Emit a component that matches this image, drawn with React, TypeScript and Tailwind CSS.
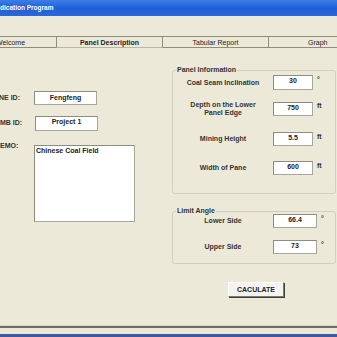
import React from "react";

const Field = ({ value, className = "" }: { value: string; className?: string }) => (
  <div
    className={`bg-white border border-[#a7a69a] border-t-[#8d8c80] border-l-[#8d8c80] text-center font-bold text-[7px] leading-[10px] text-[#222] ${className}`}
  >
    {value}
  </div>
);

const Row = ({
  label,
  value,
  unit,
  h = "h-[15px]",
  w = "w-[40px]",
}: {
  label: React.ReactNode;
  value: string;
  unit: string;
  h?: string;
  w?: string;
}) => (
  <div className="flex items-center">
    <div className="w-[100px] text-center font-bold text-[7px] leading-[8px] text-[#333]">
      {label}
    </div>
    <Field value={value} className={`${w} ${h}`} />
    <div className="ml-[4px] font-bold text-[7px] text-[#333] self-start">{unit}</div>
  </div>
);

export default function App() {
  return (
    <div
      className="w-[337px] h-[337px] overflow-hidden bg-[#ece9d8] flex flex-col text-[#222]"
      style={{ fontFamily: '"Liberation Sans", Arial, sans-serif' }}
    >
      {/* title bar */}
      <div className="h-[16px] bg-gradient-to-b from-[#3d7ee6] via-[#1f5fd6] to-[#2a66dc] flex items-center">
        <span className="text-white font-bold text-[6.5px] leading-none">dication Program</span>
      </div>

      {/* tabs */}
      <div className="mt-[20px] h-[12px] flex text-[7px] leading-none">
        <div className="w-[60px] border-y border-[#8e8d80] flex items-center -ml-[4px] pl-0 shrink-0">
          <span>Welcome</span>
        </div>
        <div className="w-[107px] border-y border-x border-[#8e8d80] border-b-[#b8b6a8] flex items-center justify-center font-bold shrink-0">
          Panel Description
        </div>
        <div className="w-[106px] border-y border-r border-[#8e8d80] flex items-center justify-center shrink-0">
          Tabular Report
        </div>
        <div className="w-[90px] border-y border-[#8e8d80] flex items-center pl-[39px] shrink-0">
          Graph
        </div>
      </div>

      {/* content */}
      <div className="flex flex-1">
        <div className="w-[172px] pt-[43px] flex flex-col text-[7px] font-bold text-[#333]">
          <div className="flex items-center h-[14px]">
            <span className="w-[35px] -ml-[1px]">NE ID:</span>
            <Field value="Fengfeng" className="w-[63px] h-[14px] pt-[1px]" />
          </div>
          <div className="flex items-center h-[15px] mt-[11px]">
            <span className="w-[35px]">MB ID:</span>
            <Field value="Project 1" className="w-[63px] h-[15px]" />
          </div>
          <div className="flex mt-[14px]">
            <span className="w-[34px] -mt-[4px]">EMO:</span>
            <div className="w-[101px] h-[77px] bg-white border border-[#a7a69a] border-t-[#8d8c80] border-l-[#8d8c80] px-[1px] text-[7px] font-bold leading-[10px] text-[#222]">
              Chinese Coal Field
            </div>
          </div>
        </div>

        <div className="flex flex-col w-[164px] pt-[18px]">
          <fieldset className="border border-[#d0cfc0] rounded-[3px] h-[128px] px-0 pb-0">
            <legend className="ml-[3px] px-[1px] font-bold text-[7px] leading-[8px] text-[#333]">
              Panel Information
            </legend>
            <div className="flex flex-col pt-[1px]">
              <Row label="Coal Seam Inclination" value="30" unit="°" />
              <div className="mt-[11px]">
                <Row
                  label={
                    <>
                      Depth on the Lower
                      <br />
                      Panel Edge
                    </>
                  }
                  value="750"
                  unit="ft"
                  h="h-[14px]"
                />
              </div>
              <div className="mt-[15px]">
                <Row label="Mining Height" value="5.5" unit="ft" h="h-[14px]" />
              </div>
              <div className="mt-[15px]">
                <Row label="Width of Pane" value="600" unit="ft" h="h-[14px]" />
              </div>
            </div>
          </fieldset>

          <fieldset className="mt-[13px] border border-[#d0cfc0] rounded-[3px] h-[57px] px-0 pb-0">
            <legend className="ml-[3px] px-[1px] font-bold text-[7px] leading-[8px] text-[#333]">
              Limit Angle
            </legend>
            <div className="flex flex-col -mt-[1px]">
              <Row label="Lower Side" value="66.4" unit="°" w="w-[44px]" h="h-[14px]" />
              <div className="mt-[12px]">
                <Row label="Upper Side" value="73" unit="°" w="w-[44px]" h="h-[14px]" />
              </div>
            </div>
          </fieldset>

          <div className="mt-[11px] pl-[56px]">
            <button className="w-[56px] h-[15px] bg-[#f4f3ee] border border-[#7a7a6e] border-t-[#fdfdfb] border-l-[#fdfdfb] shadow-[1px_1px_0_#404040] text-[7px] font-bold leading-none text-[#222]">
              CACULATE
            </button>
          </div>
        </div>
      </div>

      {/* bottom edge */}
      <div className="h-[1px] bg-[#d8d6c6]" />
      <div className="h-[2px] bg-[#6d6f5c]" />
      <div className="h-[6px] bg-[#ebe8da]" />
      <div className="h-[3px] bg-[#3d5b9a]" />
    </div>
  );
}
